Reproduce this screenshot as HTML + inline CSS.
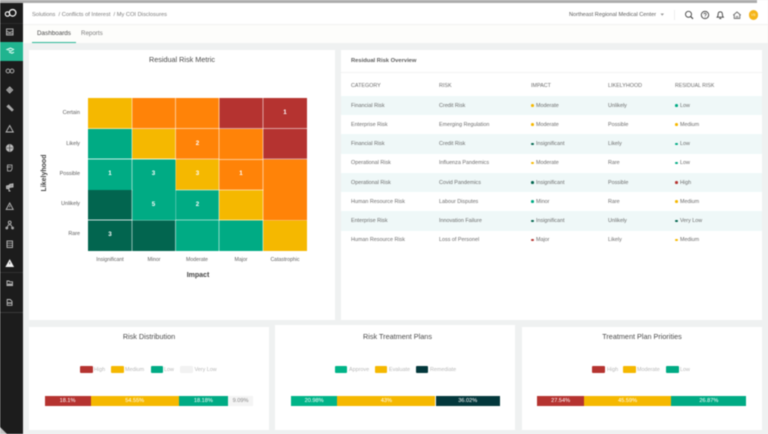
<!DOCTYPE html>
<html><head><meta charset="utf-8"><style>
html,body{margin:0;padding:0;width:768px;height:434px;overflow:hidden;background:#eff1f1}
#p{position:relative;width:768px;height:434px;overflow:hidden;background:#eff1f1;font-family:"Liberation Sans",sans-serif;filter:blur(.45px)}
#p div{position:absolute}
.t{position:absolute;white-space:nowrap;line-height:8px;font-size:5.4px;color:#6c6c6c}
.h{position:absolute;white-space:nowrap;line-height:10px;font-size:7.25px;color:#4a4a4a;text-align:center}
.l{position:absolute;white-space:nowrap;line-height:8px;font-size:5.4px;color:#b8b8b8}
.a{position:absolute;white-space:nowrap;line-height:8px;font-size:5.4px;color:#5c5c5c;text-align:right;width:40px;left:40px}
.x{position:absolute;white-space:nowrap;line-height:8px;font-size:5.2px;color:#5f5f5f;text-align:center;width:44px;top:256px}
.n{position:absolute;white-space:nowrap;line-height:8px;font-size:6.2px;color:#fff;font-weight:bold;text-align:center;width:20px}
.b{position:absolute;white-space:nowrap;line-height:10px;font-size:5.6px;color:#fff;text-align:center;top:396px;height:10px}
.d{position:absolute;width:2.6px;height:2.6px;border-radius:50%}
.s{position:absolute;height:7.5px;top:365.7px;border-radius:1px}
</style></head><body><div id="p">
<div style="left:0;top:3px;width:768px;height:21px;background:#fff"></div>
<div style="left:0;top:0;width:768px;height:3px;background:#fff"></div>
<div style="left:0;top:0;width:757px;height:3px;background:#acacac"></div>
<div style="left:22px;top:24px;width:746px;height:19px;background:#fdfdfb;border-top:1px solid #f2f2f0;box-sizing:border-box"></div>
<div style="left:32px;top:41.5px;width:44px;height:1.6px;background:#2cb898"></div>

<span class="t" style="left:32px;top:11px;color:#7c7c7c;font-size:5.7px">Solutions&nbsp; / Conflicts of Interest&nbsp; / My COI Disclosures</span>
<span class="t" style="left:37px;top:30px;font-size:6.3px;color:#484848">Dashboards</span>
<span class="t" style="left:81px;top:30px;font-size:6.2px;color:#7c7c7c">Reports</span>
<span class="t" style="left:569px;top:11px;color:#5c5c5c;font-size:5.6px">Northeast Regional Medical Center</span>
<svg style="position:absolute;left:660px;top:13px" width="5" height="4"><path d="M.5 .5H4L2.2 2.8Z" fill="#999"/></svg>
<div style="left:674px;top:10px;width:1px;height:10px;background:#eee"></div>

<svg style="position:absolute;left:683px;top:9px" width="80" height="12" fill="none" stroke="#3f3f3f" stroke-width=".9">
<circle cx="5.5" cy="5.3" r="3"/><path d="M7.8 7.6L10 9.8" stroke-width="1.1"/>
<circle cx="22" cy="6" r="3.7"/><path d="M20.9 5.2c.1-1.5 2.4-1.4 2.3 0 0 .9-1.1.9-1.1 1.8M22.1 7.8v.6" stroke-width=".7"/>
<path d="M34.2 8.2c1-1 .8-2.2 1-3.6.3-2.4 3.8-2.4 4.1 0 .2 1.4 0 2.6 1 3.6zM36.3 9.5h2"/>
<path d="M50.2 6.2L54 3l3.8 3.2M51.2 5.6V9.4h5.6V5.6" stroke="#666"/><path d="M53.2 9.4V7.4h1.6v2" stroke="#666" stroke-width=".6"/>
</svg>
<div style="left:748.5px;top:10px;width:9.5px;height:9.5px;border-radius:50%;background:#f5b417"></div>
<span class="t" style="left:751px;top:11px;font-size:3.4px;color:#fff3c8">VB</span>

<!-- sidebar -->
<div style="left:0;top:3px;width:22.5px;height:431px;background:#1c1c1c"></div>
<div style="left:0;top:42px;width:22.5px;height:19px;background:#20b48f"></div>
<div style="left:0;top:23px;width:22.5px;height:1px;background:#2c2c2c"></div>
<div style="left:0;top:272px;width:22.5px;height:1px;background:#303030"></div>
<div style="left:0;top:311.5px;width:22.5px;height:1px;background:#3a3a3a"></div>
<svg style="position:absolute;left:0;top:0" width="23" height="434" fill="none" stroke="#bdbdbd" stroke-width=".9">
<circle cx="7.5" cy="14" r="2.2" stroke="#fff" stroke-width="1.1"/><circle cx="12.6" cy="12.8" r="3.3" stroke="#fff" stroke-width="1.2"/>
<rect x="6.5" y="29" width="6.5" height="6"/><path d="M6.5 31l3.2 1.6 3.3-1.6M6.5 33.5h6.5" stroke-width=".7"/>
<path d="M7 49.5l3.5-1.4 3 1.4-2.5 1.6zM9 52l3 1.2 2-1" stroke="#e8fff8" stroke-width="1"/>
<circle cx="8" cy="71" r="1.9"/><circle cx="12" cy="71" r="1.9"/>
<path d="M9.7 87l3 3-3 3-3-3zM9.7 88.8l1.2 1.2-1.2 1.2-1.2-1.2z"/>
<path d="M7 106.5l5 4.5 1.2-1.2-4.6-4.8z" fill="#aaa" stroke="#aaa"/>
<path d="M9.7 125.5l3.6 6.5H6.1z"/>
<circle cx="9.7" cy="148" r="3.4" fill="#bdbdbd" stroke="#bdbdbd"/><path d="M6.5 148h6.4M9.7 144.6v6.8" stroke="#333" stroke-width=".6"/>
<path d="M7.5 165h4.5v4l-1.2 2H7.5zM6.8 167h4" stroke-width=".8"/>
<path d="M6.5 186l2.5-.6V189l-2.5-.5zM9.5 184.5l3.5-.7V187l-3.5.5zM9 189.5v1.5h1.5" stroke-width=".9" fill="#999"/>
<path d="M9.7 203l3.5 6.4H6.2z"/><path d="M9.7 205.5v2" stroke-width=".7"/>
<circle cx="9.7" cy="222.5" r="1.4"/><path d="M7 228.5l1.2-3.5h3l1.2 3.5" stroke-width=".8"/><circle cx="6.8" cy="228" r=".9"/><circle cx="12.6" cy="228" r=".9"/>
<rect x="7" y="241" width="5.5" height="6.5"/><path d="M7 243.2h5.5M7 245.3h5.5" stroke-width=".6"/>
<path d="M9.7 260l3.6 6.5H6.1z" fill="#f2f2f2" stroke="#f2f2f2"/><path d="M9.7 262v2.2" stroke="#333" stroke-width=".7"/>
<path d="M7 281h2l.8.8h2.7v3.7H7z" fill="none"/><path d="M8 283.5h4.5l-1 2H7z" fill="#aaa" stroke="none"/>
<path d="M7.2 299.5h3l1.8 1.8v4H7.2z"/><path d="M7.2 303h4.8" stroke-width="1.2"/>
</svg>
<svg style="position:absolute;left:0;top:427px" width="8" height="7"><path d="M0 0L7 7H0Z" fill="#c4c4c4"/></svg>

<!-- Heatmap card -->
<div style="left:29px;top:50px;width:306px;height:270px;background:#fff"></div>
<span class="h" style="left:29px;width:306px;top:54.5px">Residual Risk Metric</span>
<svg style="position:absolute;left:88px;top:97.5px" width="219" height="153" shape-rendering="crispEdges">
<g>
<rect x="0" y="0" width="44" height="31" fill="#f5b800"/><rect x="44" y="0" width="87.5" height="31" fill="#ff8308"/><rect x="131.5" y="0" width="87.5" height="31" fill="#b53330"/>
<rect x="0" y="31" width="44" height="30.5" fill="#00ab84"/><rect x="44" y="31" width="43.5" height="30.5" fill="#f5b800"/><rect x="87.5" y="31" width="87.5" height="30.5" fill="#ff8308"/><rect x="175" y="31" width="44" height="30.5" fill="#b53330"/>
<rect x="0" y="61.5" width="87.5" height="30.5" fill="#00ab84"/><rect x="87.5" y="61.5" width="43.5" height="30.5" fill="#f5b800"/><rect x="131" y="61.5" width="88" height="30.5" fill="#ff8308"/>
<rect x="0" y="92" width="44" height="61" fill="#02654f"/><rect x="44" y="92" width="87" height="30.5" fill="#00ab84"/><rect x="131" y="92" width="44" height="30.5" fill="#f5b800"/><rect x="175" y="92" width="44" height="30.5" fill="#ff8308"/>
<rect x="44" y="122.5" width="43.5" height="30.5" fill="#02654f"/><rect x="87.5" y="122.5" width="87.5" height="30.5" fill="#00ab84"/><rect x="175" y="122.5" width="44" height="30.5" fill="#f5b800"/>
</g>
<g stroke="#fff" stroke-opacity=".55" stroke-width="1">
<path d="M0 30.5H219M0 61H131M175 61H219M131 61.5H175M0 122H219M44 92H219"/>
<path d="M44 0V61M87.5 0V153M131 0V153M175 0V153M44 61V153"/>
<path d="M0 61H87M0 122H44" />
</g>
</svg>
<svg style="position:absolute;left:88px;top:97.5px" width="219" height="153" shape-rendering="crispEdges">
<rect x="44.5" y="62" width="43" height="60" fill="#00ab84"/><rect x=".5" y="62" width="43" height="29.5" fill="#00ab84"/>
<rect x="175.5" y="61.5" width="43.5" height="60.5" fill="#ff8308"/>
</svg>
<span class="n" style="left:275px;top:109px">1</span>
<span class="n" style="left:187.5px;top:139.5px">2</span>
<span class="n" style="left:100px;top:170px">1</span>
<span class="n" style="left:143.5px;top:170px">3</span>
<span class="n" style="left:187.5px;top:170px">3</span>
<span class="n" style="left:231px;top:170px">1</span>
<span class="n" style="left:143.5px;top:201px">5</span>
<span class="n" style="left:187.5px;top:201px">2</span>
<span class="n" style="left:100px;top:231px">3</span>
<span class="a" style="top:109px">Certain</span>
<span class="a" style="top:139.5px">Likely</span>
<span class="a" style="top:169.5px">Possible</span>
<span class="a" style="top:199.5px">Unlikely</span>
<span class="a" style="top:230px">Rare</span>
<span class="x" style="left:88px">Insignificant</span>
<span class="x" style="left:132px">Minor</span>
<span class="x" style="left:175px">Moderate</span>
<span class="x" style="left:219px">Major</span>
<span class="x" style="left:263px">Catastrophic</span>
<span class="h" style="left:168px;width:60px;top:271px;font-size:7px;font-weight:bold;color:#444">Impact</span>
<span class="h" style="left:15px;width:60px;top:168px;font-size:7px;font-weight:bold;color:#444;transform:rotate(-90deg)">Likelyhood</span>

<!-- Table card -->
<div style="left:341px;top:50px;width:421px;height:270px;background:#fff"></div>
<div style="left:341px;top:72px;width:421px;height:1px;background:#f3f3f3"></div>
<span class="t" style="left:351px;top:57px;font-size:5.8px;font-weight:bold;color:#5c5c5c">Residual Risk Overview</span>
<div style="left:341px;top:96px;width:421px;height:19px;background:#eff8f8"></div>
<div style="left:341px;top:134.4px;width:421px;height:19.3px;background:#eff8f8"></div>
<div style="left:341px;top:173px;width:421px;height:19px;background:#eff8f8"></div>
<div style="left:341px;top:211px;width:421px;height:20px;background:#eff8f8"></div>

<span class="t" style="left:351px;top:82px">CATEGORY</span><span class="t" style="left:439px;top:82px">RISK</span><span class="t" style="left:531px;top:82px">IMPACT</span><span class="t" style="left:608px;top:82px">LIKELYHOOD</span><span class="t" style="left:675px;top:82px;font-size:5.2px">RESIDUAL RISK</span>

<span class="t" style="left:351px;top:101.5px">Financial Risk</span><span class="t" style="left:439px;top:101.5px">Credit Risk</span><i class="d" style="left:531px;top:104px;background:#f5b800"></i><span class="t" style="left:536px;top:101.5px">Moderate</span><span class="t" style="left:608px;top:101.5px">Unlikely</span><i class="d" style="left:675px;top:104px;background:#00ab84"></i><span class="t" style="left:680px;top:101.5px">Low</span>

<span class="t" style="left:351px;top:120.7px">Enterprise Risk</span><span class="t" style="left:439px;top:120.7px">Emerging Regulation</span><i class="d" style="left:531px;top:123.2px;background:#f5b800"></i><span class="t" style="left:536px;top:120.7px">Moderate</span><span class="t" style="left:608px;top:120.7px">Possible</span><i class="d" style="left:675px;top:123.2px;background:#f5b800"></i><span class="t" style="left:680px;top:120.7px">Medium</span>

<span class="t" style="left:351px;top:140px">Financial Risk</span><span class="t" style="left:439px;top:140px">Credit Risk</span><i class="d" style="left:531px;top:142.5px;background:#02654f"></i><span class="t" style="left:536px;top:140px">Insignificant</span><span class="t" style="left:608px;top:140px">Likely</span><i class="d" style="left:675px;top:142.5px;background:#00ab84"></i><span class="t" style="left:680px;top:140px">Low</span>

<span class="t" style="left:351px;top:159.3px">Operational Risk</span><span class="t" style="left:439px;top:159.3px">Influenza Pandemics</span><i class="d" style="left:531px;top:161.8px;background:#f5b800"></i><span class="t" style="left:536px;top:159.3px">Moderate</span><span class="t" style="left:608px;top:159.3px">Rare</span><i class="d" style="left:675px;top:161.8px;background:#00ab84"></i><span class="t" style="left:680px;top:159.3px">Low</span>

<span class="t" style="left:351px;top:178.6px">Operational Risk</span><span class="t" style="left:439px;top:178.6px">Covid Pandemics</span><i class="d" style="left:531px;top:181.1px;background:#02654f"></i><span class="t" style="left:536px;top:178.6px">Insignificant</span><span class="t" style="left:608px;top:178.6px">Possible</span><i class="d" style="left:675px;top:181.1px;background:#b53330"></i><span class="t" style="left:680px;top:178.6px">High</span>

<span class="t" style="left:351px;top:197.8px">Human Resource Risk</span><span class="t" style="left:439px;top:197.8px">Labour Disputes</span><i class="d" style="left:531px;top:200.3px;background:#00ab84"></i><span class="t" style="left:536px;top:197.8px">Minor</span><span class="t" style="left:608px;top:197.8px">Rare</span><i class="d" style="left:675px;top:200.3px;background:#f5b800"></i><span class="t" style="left:680px;top:197.8px">Medium</span>

<span class="t" style="left:351px;top:217px">Enterprise Risk</span><span class="t" style="left:439px;top:217px">Innovation Failure</span><i class="d" style="left:531px;top:219.5px;background:#02654f"></i><span class="t" style="left:536px;top:217px">Insignificant</span><span class="t" style="left:608px;top:217px">Unlikely</span><i class="d" style="left:675px;top:219.5px;background:#02654f"></i><span class="t" style="left:680px;top:217px">Very Low</span>

<span class="t" style="left:351px;top:236.3px">Human Resource Risk</span><span class="t" style="left:439px;top:236.3px">Loss of Personel</span><i class="d" style="left:531px;top:238.8px;background:#b53330"></i><span class="t" style="left:536px;top:236.3px">Major</span><span class="t" style="left:608px;top:236.3px">Likely</span><i class="d" style="left:675px;top:238.8px;background:#f5b800"></i><span class="t" style="left:680px;top:236.3px">Medium</span>

<!-- Bottom cards -->
<div style="left:29px;top:326.5px;width:240px;height:103.5px;background:#fff"></div>
<div style="left:275px;top:325px;width:240px;height:104.5px;background:#fff"></div>
<div style="left:522px;top:326.5px;width:240px;height:103.5px;background:#fff"></div>
<span class="h" style="left:29px;width:240px;top:331.5px">Risk Distribution</span>
<span class="h" style="left:275px;width:245px;top:331.5px">Risk Treatment Plans</span>
<span class="h" style="left:522px;width:240px;top:331.5px">Treatment Plan Priorities</span>

<i class="s" style="left:80px;width:12.5px;background:#b53330"></i><span class="l" style="left:94px;top:366px">High</span>
<i class="s" style="left:111px;width:12.5px;background:#f5b800"></i><span class="l" style="left:125px;top:366px">Medium</span>
<i class="s" style="left:150.5px;width:12.5px;background:#00ab84"></i><span class="l" style="left:164px;top:366px">Low</span>
<i class="s" style="left:180px;width:12.5px;background:#f2f2f2"></i><span class="l" style="left:194.5px;top:366px">Very Low</span>

<i class="s" style="left:334.7px;width:12.5px;background:#00b488"></i><span class="l" style="left:349px;top:366px">Approve</span>
<i class="s" style="left:374.7px;width:12.5px;background:#f5b800"></i><span class="l" style="left:389px;top:366px">Evaluate</span>
<i class="s" style="left:415.5px;width:12.5px;background:#03383c"></i><span class="l" style="left:430px;top:366px">Remediate</span>

<i class="s" style="left:592.3px;width:12.5px;background:#b53330"></i><span class="l" style="left:607px;top:366px">High</span>
<i class="s" style="left:623.3px;width:12.5px;background:#f5b800"></i><span class="l" style="left:637px;top:366px">Moderate</span>
<i class="s" style="left:666.3px;width:12.5px;background:#00ab84"></i><span class="l" style="left:680px;top:366px">Low</span>

<span class="b" style="left:44.5px;width:46.2px;background:#b53330">18.1%</span>
<span class="b" style="left:90.7px;width:88px;background:#f5b800">54.55%</span>
<span class="b" style="left:178.7px;width:49.3px;background:#00ab84">18.18%</span>
<span class="b" style="left:228px;width:25px;background:#f4f4f4;color:#888">9.09%</span>

<span class="b" style="left:291px;width:46.2px;background:#00b488">20.98%</span>
<span class="b" style="left:337.2px;width:98.3px;background:#f5b800">43%</span>
<span class="b" style="left:435.5px;width:64.5px;background:#03383c">36.02%</span>

<span class="b" style="left:537.3px;width:46.7px;background:#b53330">27.54%</span>
<span class="b" style="left:584px;width:87.3px;background:#f5b800">45.59%</span>
<span class="b" style="left:671.3px;width:75.2px;background:#00ab84">26.87%</span>
</div></body></html>
